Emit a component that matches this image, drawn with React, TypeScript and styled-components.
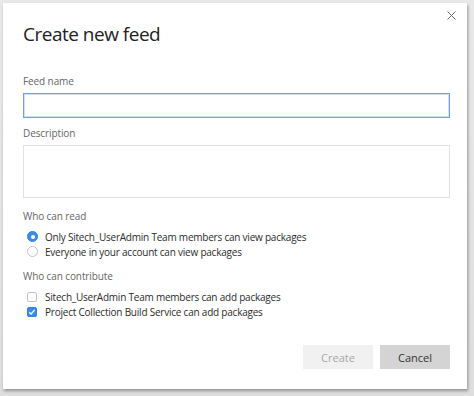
import React, { useState } from 'react';
import styled, { createGlobalStyle } from 'styled-components';

const GlobalStyle = createGlobalStyle`
    html, body {
        margin : 0;
        padding : 0;
        background : #e4e4e4;
        font-family : "Open Sans", "Noto Sans", sans-serif;
    }
`;

const Page = styled.div`
    width: 474px;
    height: 396px;
    padding : 3px 0 0 3px;
    box-sizing : border-box;
    background : linear-gradient(#e9e9e9, #dedede);
`;

const Dialog = styled.div`
    position : relative;
    width: 464px;
    height: 386px;
    background : white;
    box-sizing : border-box;
    padding : 18px 17px 0 20px;
    box-shadow: 1px 2px 3px rgba(0, 0, 0, 0.35);
    display : flex;
    flex-direction : column;
`;

const Title = styled.div`
    font-size : 19px;
    line-height : 26px;
    color : #222;
    letter-spacing : -0.5px;
`;

const CloseButton = styled.button`
    position : absolute;
    top : 4px;
    right : 8px;
    width: 16px;
    height: 16px;
    padding : 0;
    border : none;
    background : none;
    display : flex;
    align-items : center;
    justify-content : center;
    cursor : pointer;
`;

const Label = styled.div<{ $top: number }>`
    margin-top : ${(p) => p.$top}px;
    font-size : 10px;
    line-height : 16px;
    letter-spacing : -0.1px;
    color : #666;
`;

const TextInput = styled.input<{ $focused?: boolean }>`
    margin-top : 4px;
    height: 25px;
    width: 100%;
    box-sizing : border-box;
    border : 1px solid ${(p) => (p.$focused ? '#6fa3d8' : '#e2e2e2')};
    box-shadow : ${(p) => (p.$focused ? 'inset 0 0 0 1px #cfe0f2' : 'none')};
    outline : none;
    font-family : inherit;
`;

const TextArea = styled.textarea`
    margin-top : 4px;
    height: 53px;
    width: 100%;
    box-sizing : border-box;
    border : 1px solid #e2e2e2;
    outline : none;
    resize : none;
    font-family : inherit;
`;

const Options = styled.div`
    margin-top : 5px;
    display : flex;
    flex-direction : column;
`;

const Option = styled.label`
    height: 15px;
    display : flex;
    align-items : center;
    font-size : 10px;
    letter-spacing : -0.22px;
    color : #2b2b2b;
    cursor : pointer;
`;

const Radio = styled.span<{ $checked: boolean }>`
    width: 11px;
    height: 11px;
    margin : 0 7px 0 4px;
    box-sizing : border-box;
    border-radius : 50%;
    border : 1px solid ${(p) => (p.$checked ? '#2f83e6' : '#c4c4c4')};
    background : ${(p) => (p.$checked ? '#3b8beb' : 'white')};
    display : flex;
    align-items : center;
    justify-content : center;

    &::after {
        content : '';
        width: 4px;
        height: 4px;
        border-radius : 50%;
        background : white;
        display : ${(p) => (p.$checked ? 'block' : 'none')};
    }
`;

const Check = styled.span<{ $checked: boolean }>`
    width: 10px;
    height: 10px;
    margin : 0 8px 0 4px;
    box-sizing : border-box;
    border-radius : 2px;
    border : 1px solid ${(p) => (p.$checked ? '#2f83e6' : '#c4c4c4')};
    background : ${(p) => (p.$checked ? '#3b8beb' : 'white')};
    display : flex;
    align-items : center;
    justify-content : center;
`;

const Footer = styled.div`
    margin-top : 26px;
    display : flex;
    justify-content : flex-end;
    gap : 7px;
`;

const Button = styled.button<{ $primary?: boolean }>`
    width: 70px;
    height: 24px;
    border : none;
    padding : 0;
    font-family : inherit;
    font-size : 11px;
    background : ${(p) => (p.$primary ? '#f1f1f1' : '#d4d4d4')};
    color : ${(p) => (p.$primary ? '#a8a8a8' : '#333')};
    cursor : pointer;
`;

const readOptions = [
    'Only Sitech_UserAdmin Team members can view packages',
    'Everyone in your account can view packages',
];

const contributeOptions = [
    'Sitech_UserAdmin Team members can add packages',
    'Project Collection Build Service can add packages',
];

const App = () => {
    const [read, setRead] = useState(0);
    const [contribute, setContribute] = useState([false, true]);

    return (
        <Page>
            <GlobalStyle />
            <Dialog>
                <CloseButton aria-label="Close">
                    <svg width="9" height="9" viewBox="0 0 9 9">
                        <path d="M0.5 0.5 L8.5 8.5 M8.5 0.5 L0.5 8.5" stroke="#6a6a6a" strokeWidth="1" />
                    </svg>
                </CloseButton>
                <Title>Create new feed</Title>

                <Label $top={26}>Feed name</Label>
                <TextInput $focused />

                <Label $top={7}>Description</Label>
                <TextArea />

                <Label $top={10}>Who can read</Label>
                <Options>
                    {readOptions.map((text, i) => (
                        <Option key={i} onClick={() => setRead(i)}>
                            <Radio $checked={read === i} />
                            {text}
                        </Option>
                    ))}
                </Options>

                <Label $top={9}>Who can contribute</Label>
                <Options>
                    {contributeOptions.map((text, i) => (
                        <Option
                            key={i}
                            onClick={() => setContribute(contribute.map((v, j) => (j === i ? !v : v)))}
                        >
                            <Check $checked={contribute[i]}>
                                {contribute[i] && (
                                    <svg width="8" height="8" viewBox="0 0 8 8">
                                        <path d="M1.3 4.2 L3.2 6 L6.7 1.8" stroke="white" strokeWidth="1.3" fill="none" />
                                    </svg>
                                )}
                            </Check>
                            {text}
                        </Option>
                    ))}
                </Options>

                <Footer>
                    <Button $primary>Create</Button>
                    <Button>Cancel</Button>
                </Footer>
            </Dialog>
        </Page>
    );
};

export default App;
